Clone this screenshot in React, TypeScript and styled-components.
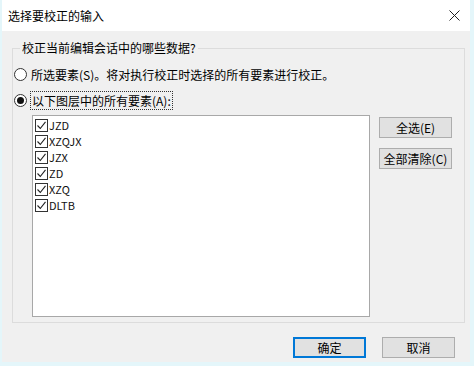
import styled, { createGlobalStyle } from "styled-components"

const GlobalStyles = createGlobalStyle`
  *, *::before, *::after { box-sizing: border-box; margin: 0; padding: 0; }
  html, body { width: 474px; height: 366px; overflow: hidden; }
  body {
    background: #e4f6fa;
    font-family: "Noto Sans CJK SC", "Noto Sans", sans-serif;
    font-size: 12px;
    color: #000;
  }
`

const Window = styled.div`
  margin-left: 2px;
  width: 468px;
  height: 362px;
  display: flex;
  flex-direction: column;
  background: #f0f0f0;
`

const TitleBar = styled.div`
  height: 31px;
  background: #fff;
  display: flex;
  align-items: center;
  justify-content: space-between;
  padding: 0 10px 0 6px;
  font-size: 12px;
`

const Body = styled.div`
  flex: 1;
  display: flex;
  flex-direction: column;
  padding: 10px 5px 0 10px;
`

const Group = styled.fieldset`
  border: 1px solid #dcdcdc;
  height: 282px;
  padding: 8px 0 0 1px;
  display: flex;
  flex-direction: column;
`

const Legend = styled.legend`
  padding: 0 2px;
  margin-left: 6px;
  line-height: 14px;
`

const RadioRow = styled.label<{ $top?: number; $gap?: number }>`
  display: flex;
  align-items: center;
  height: 18px;
  gap: 4px;
  margin-top: ${(p) => p.$top ?? 0}px;
  margin-bottom: ${(p) => p.$gap ?? 0}px;
`

const RadioCircle = styled.span<{ $checked?: boolean }>`
  width: 13px;
  height: 13px;
  border-radius: 50%;
  border: 1px solid #333;
  background: #fff;
  display: flex;
  align-items: center;
  justify-content: center;
  &::after {
    content: "";
    width: 7px;
    height: 7px;
    border-radius: 50%;
    background: ${(p) => (p.$checked ? "#111" : "transparent")};
  }
`

const FocusText = styled.span`
  outline: 1px dotted #333;
  outline-offset: 0;
  padding: 0 1px;
`

const Content = styled.div`
  display: flex;
  gap: 9px;
  margin-left: 18px;
  margin-top: 6px;
`

const List = styled.div`
  width: 338px;
  height: 202px;
  background: #fff;
  border: 1px solid #a8a8a8;
  padding: 1px 2px;
  display: flex;
  flex-direction: column;
`

const Item = styled.div`
  display: flex;
  align-items: center;
  height: 16px;
  gap: 1px;
  font-size: 11px;
  color: #111;
`

const CheckBox = styled.span`
  width: 13px;
  height: 13px;
  border: 1px solid #333;
  background: #fff;
  display: flex;
  align-items: center;
  justify-content: center;
`

const SideButtons = styled.div`
  display: flex;
  flex-direction: column;
  gap: 10px;
  padding-top: 2px;
`

const Button = styled.button<{ $default?: boolean }>`
  width: 73px;
  height: 21px;
  font-family: inherit;
  font-size: 12px;
  background: #e1e1e1;
  border: 1px solid ${(p) => (p.$default ? "#0078d7" : "#adadad")};
  box-shadow: ${(p) => (p.$default ? "inset 0 0 0 1px #0078d7" : "none")};
  color: #000;
`

const Footer = styled.div`
  display: flex;
  justify-content: flex-end;
  gap: 16px;
  padding: 14px 10px 0 0;
`

const Check = () => (
  <svg width="11" height="11" viewBox="0 0 11 11">
    <path d="M1.5 5.5 L4.3 8.5 L9.5 1.8" fill="none" stroke="#222" strokeWidth="1.1" />
  </svg>
)

const layers = ["JZD", "XZQJX", "JZX", "ZD", "XZQ", "DLTB"]

const App = () => (
  <>
    <GlobalStyles />
    <Window>
      <TitleBar>
        <span>选择要校正的输入</span>
        <svg width="11" height="11" viewBox="0 0 11 11">
          <path d="M0.5 0.5 L10.5 10.5 M10.5 0.5 L0.5 10.5" stroke="#222" strokeWidth="1" />
        </svg>
      </TitleBar>
      <Body>
        <Group>
          <Legend>校正当前编辑会话中的哪些数据?</Legend>
          <RadioRow $top={2} $gap={8}>
            <RadioCircle />
            <span>所选要素(S)。将对执行校正时选择的所有要素进行校正。</span>
          </RadioRow>
          <RadioRow>
            <RadioCircle $checked />
            <FocusText>以下图层中的所有要素(A):</FocusText>
          </RadioRow>
          <Content>
            <List>
              {layers.map((name) => (
                <Item key={name}>
                  <CheckBox>
                    <Check />
                  </CheckBox>
                  <span>{name}</span>
                </Item>
              ))}
            </List>
            <SideButtons>
              <Button>全选(E)</Button>
              <Button>全部清除(C)</Button>
            </SideButtons>
          </Content>
        </Group>
        <Footer>
          <Button $default>确定</Button>
          <Button>取消</Button>
        </Footer>
      </Body>
    </Window>
  </>
)

export default App
